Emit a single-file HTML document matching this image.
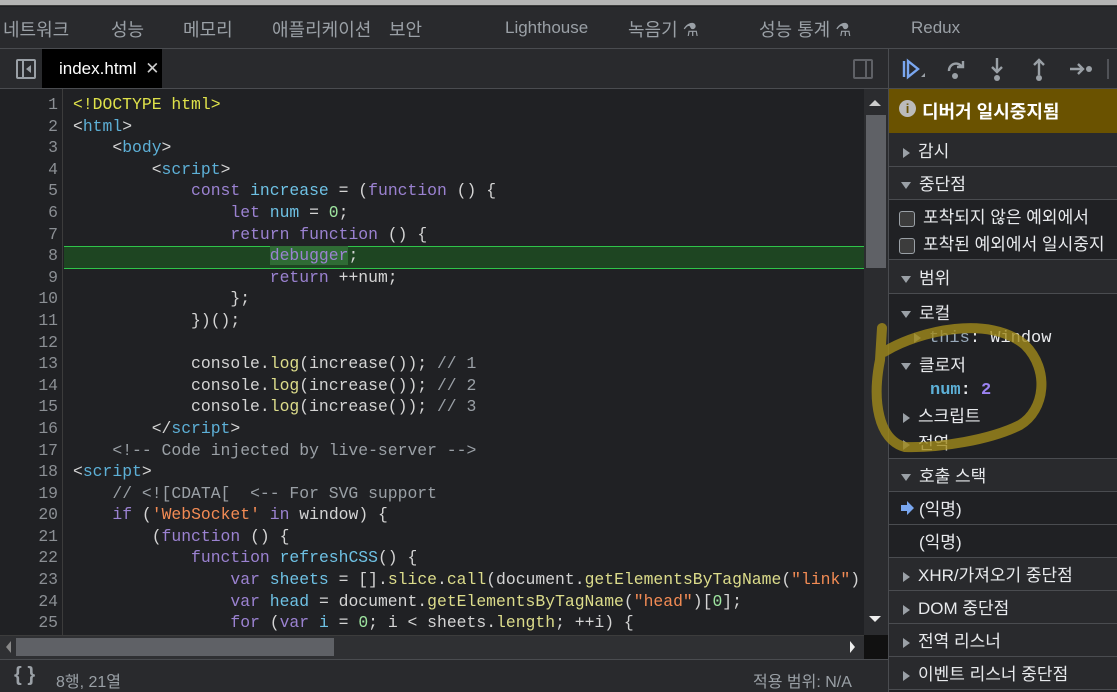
<!DOCTYPE html>
<html><head><meta charset="utf-8"><style>
*{margin:0;padding:0;box-sizing:border-box}
body{width:1117px;height:692px;overflow:hidden;background:#202124;font-family:"Liberation Sans","Noto Sans CJK KR",sans-serif;color:#e8eaed;position:relative}
.abs{position:absolute}
#top{left:0;top:0;width:1117px;height:6px;background:#b5b5b5;border-bottom:1px solid #3c3c3c}
#tabs{left:0;top:7px;width:1117px;height:42px;background:#292a2d;border-bottom:1px solid #4a4c50;font-size:18px;color:#9aa0a6}
#tabs span{position:absolute;top:9px}
#tb{left:0;top:49px;width:888px;height:40px;background:#292a2d;border-bottom:1px solid #4a4c50}
#tab1{left:42px;top:49px;width:120px;height:39px;background:#000;color:#fff;font-size:17px;padding:10px 0 0 17px}
#gut{left:0;top:89px;width:63px;height:546px;border-right:1px solid #3c3c3c}
.code{font-family:"Liberation Mono","Noto Sans CJK KR",monospace;font-size:16.4px;line-height:21.6px;white-space:pre}
#ln{left:0;top:94px;width:58px;text-align:right;color:#8b8f94}
#src{left:73px;top:94px;color:#d4d4d4}
#hl{left:64px;top:246px;width:800px;height:23px;background:#1e4522;border-top:1px solid #2fc44a;border-bottom:1px solid #2fc44a}
.t{color:#5db0d7}.k{color:#9b82d1}.v{color:#6ec1e4}.n{color:#9ee5a0}.f{color:#dcdc8b}.c{color:#9aa0a6}.s{color:#f28b54}.d{color:#dfe24a}
#vs{left:864px;top:89px;width:24px;height:546px;background:#2b2c2f}
#vthumb{left:866px;top:115px;width:20px;height:153px;background:#5f6166}
#hs{left:0;top:635px;width:864px;height:24px;background:#2f3033;border-top:1px solid #3c3c3c}
#hthumb{left:16px;top:638px;width:318px;height:18px;background:#5f6166}
#corner{left:864px;top:635px;width:24px;height:24px;background:#111}
#st{left:0;top:659px;width:888px;height:33px;background:#292a2d;border-top:1px solid #4a4c50;font-size:16px;color:#9aa0a6}
#sep{left:888px;top:49px;width:1px;height:643px;background:#4a4c50}
#rp{left:889px;top:49px;width:228px;height:643px;background:#202124}
#dtb{left:889px;top:49px;width:228px;height:40px;background:#292a2d;border-bottom:1px solid #4a4c50}
#ban{left:889px;top:89px;width:228px;height:44px;background:#6a5200;font-size:18px;font-weight:bold;color:#fff}
.row{position:absolute;left:889px;width:228px;font-size:17px;color:#e8eaed;border-bottom:1px solid #4a4c50;background:#292a2d}
.tri{display:inline-block;width:0;height:0;margin-right:8px;vertical-align:middle}
.tr{border-left:7px solid #9aa0a6;border-top:5px solid transparent;border-bottom:5px solid transparent}
.td{border-top:7px solid #9aa0a6;border-left:5px solid transparent;border-right:5px solid transparent}
.l{position:absolute;font-size:17px;white-space:nowrap}
.cb{display:inline-block;width:16px;height:16px;border:1px solid #9aa0a6;border-radius:3px;background:#3c3c3c;vertical-align:middle;margin-right:8px}
</style></head><body>
<div class="abs" id="top"></div>
<div class="abs" id="tabs">
<span style="left:3px">네트워크</span><span style="left:111px">성능</span><span style="left:183px">메모리</span><span style="left:272px">애플리케이션</span><span style="left:389px">보안</span><span style="left:505px;top:11px;font-size:17px">Lighthouse</span><span style="left:628px">녹음기 ⚗</span><span style="left:759px">성능 통계 ⚗</span><span style="left:911px;top:11px;font-size:17px">Redux</span>
</div>
<div class="abs" id="tb"></div>
<div class="abs" style="left:16px;top:59px;width:20px;height:20px;border:2px solid #9aa0a6;border-radius:2px"><div style="position:absolute;left:4px;top:0;width:2px;height:16px;background:#9aa0a6"></div><div style="position:absolute;left:8px;top:4px;border-right:5px solid #9aa0a6;border-top:4px solid transparent;border-bottom:4px solid transparent"></div></div>
<div class="abs" id="tab1">index.html <span style="color:#ccc;margin-left:4px">✕</span></div>
<div class="abs" style="left:853px;top:59px;width:20px;height:20px;border:2px solid #5f6166;border-radius:2px"><div style="position:absolute;right:4px;top:0;width:2px;height:16px;background:#5f6166"></div></div>
<div class="abs" id="gut"></div>
<div class="abs" id="hl"></div>
<div class="abs code" id="ln">1
2
3
4
5
6
7
8
9
10
11
12
13
14
15
16
17
18
19
20
21
22
23
24
25</div>
<div class="abs code" id="src"><span class="d">&lt;!DOCTYPE html&gt;</span>
&lt;<span class="t">html</span>&gt;
    &lt;<span class="t">body</span>&gt;
        &lt;<span class="t">script</span>&gt;
            <span class="k">const</span> <span class="v">increase</span> = (<span class="k">function</span> () {
                <span class="k">let</span> <span class="v">num</span> = <span class="n">0</span>;
                <span class="k">return</span> <span class="k">function</span> () {
                    <span class="k" style="background:#2f6b35">debugger</span>;
                    <span class="k">return</span> ++num;
                };
            })();

            console.<span class="f">log</span>(increase()); <span class="c">// 1</span>
            console.<span class="f">log</span>(increase()); <span class="c">// 2</span>
            console.<span class="f">log</span>(increase()); <span class="c">// 3</span>
        &lt;/<span class="t">script</span>&gt;
    <span class="c">&lt;!-- Code injected by live-server --&gt;</span>
&lt;<span class="t">script</span>&gt;
    <span class="c">// &lt;![CDATA[  &lt;-- For SVG support</span>
    <span class="k">if</span> (<span class="s">'WebSocket'</span> <span class="k">in</span> window) {
        (<span class="k">function</span> () {
            <span class="k">function</span> <span class="v">refreshCSS</span>() {
                <span class="k">var</span> <span class="v">sheets</span> = [].<span class="f">slice</span>.<span class="f">call</span>(document.<span class="f">getElementsByTagName</span>(<span class="s">"link"</span>)
                <span class="k">var</span> <span class="v">head</span> = document.<span class="f">getElementsByTagName</span>(<span class="s">"head"</span>)[<span class="n">0</span>];
                <span class="k">for</span> (<span class="k">var</span> <span class="v">i</span> = <span class="n">0</span>; i &lt; sheets.<span class="f">length</span>; ++i) {</div>
<div class="abs" id="vs"></div>
<div class="abs" id="vthumb"></div>
<div class="abs" style="left:869px;top:100px;border-bottom:6px solid #ccc;border-left:6px solid transparent;border-right:6px solid transparent"></div>
<div class="abs" style="left:869px;top:616px;border-top:6px solid #eee;border-left:6px solid transparent;border-right:6px solid transparent"></div>
<div class="abs" id="hs"></div>
<div class="abs" id="hthumb"></div>
<div class="abs" style="left:6px;top:641px;border-right:5px solid #888;border-top:6px solid transparent;border-bottom:6px solid transparent"></div>
<div class="abs" style="left:850px;top:641px;border-left:5px solid #eee;border-top:6px solid transparent;border-bottom:6px solid transparent"></div>
<div class="abs" id="corner"></div>
<div class="abs" id="st"><span style="position:absolute;left:14px;top:4px;font-size:20px;font-weight:bold">{ }</span><span style="position:absolute;left:56px;top:8px">8행, 21열</span><span style="position:absolute;left:753px;top:8px">적용 범위: N/A</span></div>
<div class="abs" id="sep"></div>
<div class="abs" id="rp"></div>
<div class="abs" id="dtb">
<svg width="228" height="40" style="position:absolute;left:0;top:0" fill="none" stroke-width="2.4">
<path d="M15 12v16M19 12l10 8-10 8z" stroke="#7aa7f0"/><path d="M32 28l4 0 0-4z" fill="#9aa0a6" stroke="none"/>
<path d="M60 22a7 7 0 0 1 13-4M74 12v6h-6" stroke="#9aa0a6"/><circle cx="66" cy="27" r="3" fill="#9aa0a6" stroke="none"/>
<path d="M108 9v14M103 18l5 5 5-5" stroke="#9aa0a6"/><circle cx="108" cy="29" r="3" fill="#9aa0a6" stroke="none"/>
<path d="M150 26V11M145 16l5-5 5 5" stroke="#9aa0a6"/><circle cx="150" cy="29" r="3" fill="#9aa0a6" stroke="none"/>
<path d="M181 20h13M189 15l5 5-5 5" stroke="#9aa0a6"/><circle cx="200" cy="20" r="3" fill="#9aa0a6" stroke="none"/>
<path d="M219 10v20" stroke="#5f6166" stroke-width="1.5"/>
</svg></div>
<div class="abs" id="ban"><span style="position:absolute;left:10px;top:11px;width:17px;height:17px;border-radius:50%;background:#bbb;color:#6a5200;font-size:13px;text-align:center;line-height:17px">i</span><span style="position:absolute;left:33px;top:9px">디버거 일시중지됨</span></div>
<div class="row" style="top:133px;height:34px"><span class="l" style="left:14px;top:4px"><i class="tri tr"></i>감시</span></div>
<div class="row" style="top:167px;height:33px"><span class="l" style="left:12px;top:3px"><i class="tri td"></i>중단점</span></div>
<div class="row" style="top:200px;height:60px;background:#202124"><span class="l" style="left:10px;top:3px"><i class="cb"></i>포착되지 않은 예외에서</span><span class="l" style="left:10px;top:30px"><i class="cb"></i>포착된 예외에서 일시중지</span></div>
<div class="row" style="top:260px;height:34px"><span class="l" style="left:12px;top:4px"><i class="tri td"></i>범위</span></div>
<div class="row" style="top:294px;height:165px;background:#202124">
<span class="l" style="left:12px;top:5px"><i class="tri td"></i>로컬</span>
<span class="l code" style="left:25px;top:34px"><i class="tri tr"></i><span style="color:#9ab">this</span>: Window</span>
<span class="l" style="left:12px;top:57px"><i class="tri td"></i>클로저</span>
<span class="l code" style="left:41px;top:86px;font-weight:bold"><span style="color:#5db0d7">num</span>: <span style="color:#9b82f1">2</span></span>
<span class="l" style="left:14px;top:108px"><i class="tri tr"></i>스크립트</span>
<span class="l" style="left:14px;top:135px"><i class="tri tr"></i>전역</span>
</div>
<div class="row" style="top:459px;height:33px"><span class="l" style="left:12px;top:3px"><i class="tri td"></i>호출 스택</span></div>
<div class="row" style="top:492px;height:33px;background:#202124"><svg style="position:absolute;left:11px;top:9px" width="14" height="14"><path d="M1 4h6V0l7 7-7 7v-4H1z" fill="#7aa7f0"/></svg><span class="l" style="left:30px;top:3px">(익명)</span></div>
<div class="row" style="top:525px;height:33px;background:#202124"><span class="l" style="left:30px;top:3px">(익명)</span></div>
<div class="row" style="top:558px;height:33px"><span class="l" style="left:14px;top:3px"><i class="tri tr"></i>XHR/가져오기 중단점</span></div>
<div class="row" style="top:591px;height:33px"><span class="l" style="left:14px;top:3px"><i class="tri tr"></i>DOM 중단점</span></div>
<div class="row" style="top:624px;height:33px"><span class="l" style="left:14px;top:3px"><i class="tri tr"></i>전역 리스너</span></div>
<div class="row" style="top:657px;height:33px"><span class="l" style="left:14px;top:3px"><i class="tri tr"></i>이벤트 리스너 중단점</span></div>
<svg class="abs" style="left:0;top:0;pointer-events:none" width="1117" height="692"><path d="M884 352C920 330 990 315 1025 345C1050 370 1045 410 1020 425C990 440 940 448 905 447C878 440 872 400 880 360L882 328" fill="none" stroke="#a08a1a" stroke-opacity="0.8" stroke-width="10" stroke-linecap="round"/></svg>
</body></html>
